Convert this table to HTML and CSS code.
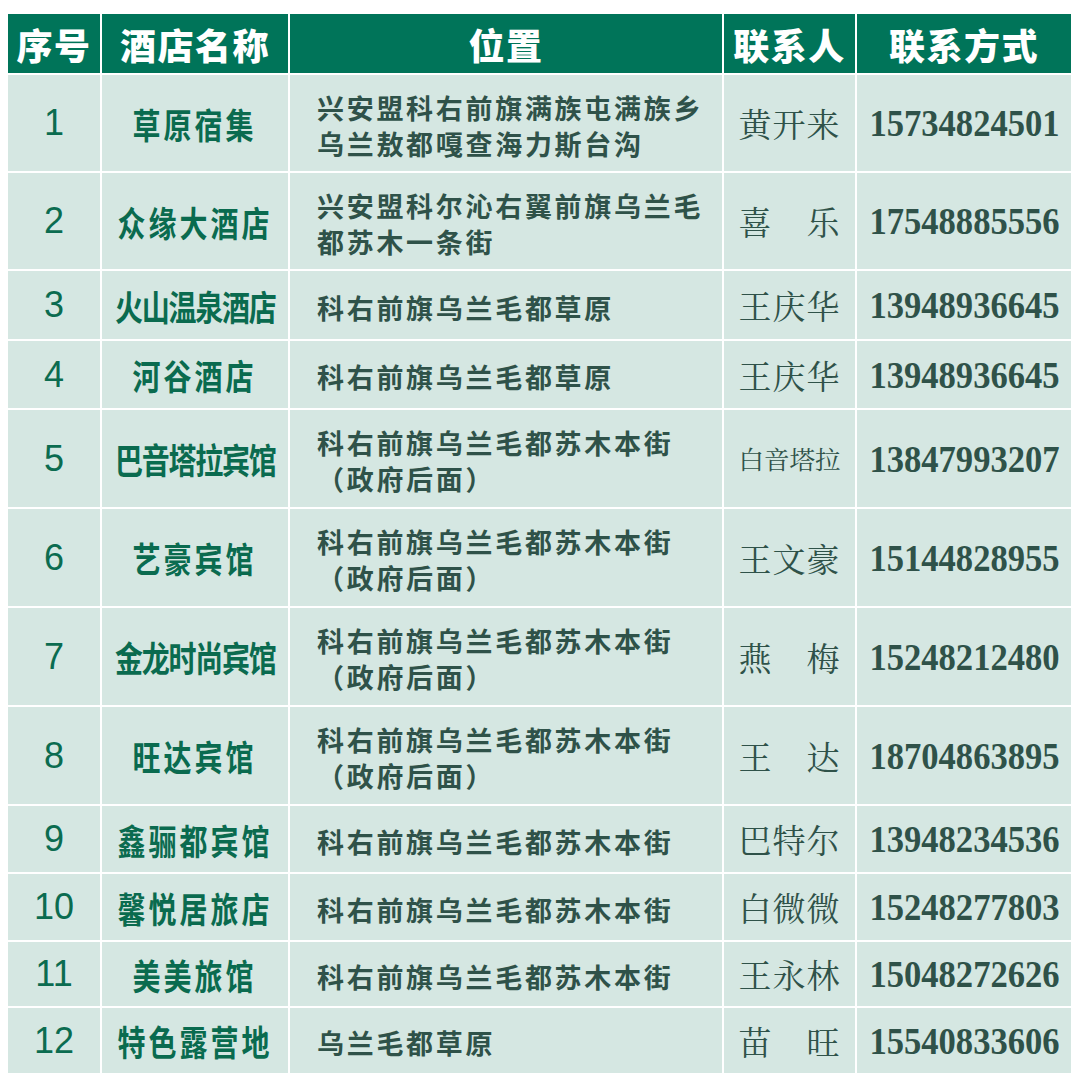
FILE: index.html
```html
<!DOCTYPE html>
<html lang="zh-CN">
<head>
<meta charset="utf-8">
<title>酒店信息</title>
<link rel="stylesheet" href="styles.css">
</head>
<body>
<table class="hotels">
  <colgroup>
    <col class="c-no"><col class="c-name"><col class="c-addr"><col class="c-person"><col class="c-phone">
  </colgroup>
  <thead>
    <tr class="r-head"><th>序号</th><th>酒店名称</th><th>位置</th><th>联系人</th><th>联系方式</th></tr>
  </thead>
  <tbody>
    <tr class="r96">
      <td class="no">1</td>
      <td class="name"><div class="fit"><span class="nm sp-wide">草原宿集</span></div></td>
      <td class="addr">兴安盟科右前旗满族屯满族乡<br>乌兰敖都嘎查海力斯台沟</td>
      <td class="person">黄开来</td>
      <td class="phone"><span class="ph">15734824501</span></td>
    </tr>
    <tr class="r96">
      <td class="no">2</td>
      <td class="name"><div class="fit"><span class="nm sp-wide">众缘大酒店</span></div></td>
      <td class="addr">兴安盟科尔沁右翼前旗乌兰毛<br>都苏木一条街</td>
      <td class="person">喜　乐</td>
      <td class="phone"><span class="ph">17548885556</span></td>
    </tr>
    <tr class="r68">
      <td class="no">3</td>
      <td class="name"><div class="fit"><span class="nm sp-tight">火山温泉酒店</span></div></td>
      <td class="addr">科右前旗乌兰毛都草原</td>
      <td class="person">王庆华</td>
      <td class="phone"><span class="ph">13948936645</span></td>
    </tr>
    <tr class="r67">
      <td class="no">4</td>
      <td class="name"><div class="fit"><span class="nm sp-wide">河谷酒店</span></div></td>
      <td class="addr">科右前旗乌兰毛都草原</td>
      <td class="person">王庆华</td>
      <td class="phone"><span class="ph">13948936645</span></td>
    </tr>
    <tr class="r97">
      <td class="no">5</td>
      <td class="name"><div class="fit"><span class="nm sp-tight">巴音塔拉宾馆</span></div></td>
      <td class="addr">科右前旗乌兰毛都苏木本街<br>（政府后面）</td>
      <td class="person small">白音塔拉</td>
      <td class="phone"><span class="ph">13847993207</span></td>
    </tr>
    <tr class="r97">
      <td class="no">6</td>
      <td class="name"><div class="fit"><span class="nm sp-wide">艺豪宾馆</span></div></td>
      <td class="addr">科右前旗乌兰毛都苏木本街<br>（政府后面）</td>
      <td class="person">王文豪</td>
      <td class="phone"><span class="ph">15144828955</span></td>
    </tr>
    <tr class="r97">
      <td class="no">7</td>
      <td class="name"><div class="fit"><span class="nm sp-tight">金龙时尚宾馆</span></div></td>
      <td class="addr">科右前旗乌兰毛都苏木本街<br>（政府后面）</td>
      <td class="person">燕　梅</td>
      <td class="phone"><span class="ph">15248212480</span></td>
    </tr>
    <tr class="r97">
      <td class="no">8</td>
      <td class="name"><div class="fit"><span class="nm sp-wide">旺达宾馆</span></div></td>
      <td class="addr">科右前旗乌兰毛都苏木本街<br>（政府后面）</td>
      <td class="person">王　达</td>
      <td class="phone"><span class="ph">18704863895</span></td>
    </tr>
    <tr class="r66">
      <td class="no">9</td>
      <td class="name"><div class="fit"><span class="nm sp-wide">鑫骊都宾馆</span></div></td>
      <td class="addr">科右前旗乌兰毛都苏木本街</td>
      <td class="person">巴特尔</td>
      <td class="phone"><span class="ph">13948234536</span></td>
    </tr>
    <tr class="r66">
      <td class="no">10</td>
      <td class="name"><div class="fit"><span class="nm sp-wide">馨悦居旅店</span></div></td>
      <td class="addr">科右前旗乌兰毛都苏木本街</td>
      <td class="person">白微微</td>
      <td class="phone"><span class="ph">15248277803</span></td>
    </tr>
    <tr class="r64">
      <td class="no">11</td>
      <td class="name"><div class="fit"><span class="nm sp-wide">美美旅馆</span></div></td>
      <td class="addr">科右前旗乌兰毛都苏木本街</td>
      <td class="person">王永林</td>
      <td class="phone"><span class="ph">15048272626</span></td>
    </tr>
    <tr class="r65">
      <td class="no">12</td>
      <td class="name"><div class="fit"><span class="nm sp-wide">特色露营地</span></div></td>
      <td class="addr">乌兰毛都草原</td>
      <td class="person">苗　旺</td>
      <td class="phone"><span class="ph">15540833606</span></td>
    </tr>
  </tbody>
</table>
</body>
</html>
```

FILE: styles.css
```css
html, body {
  margin: 0;
  padding: 0;
  background: #ffffff;
}

body {
  font-family: "Noto Sans CJK SC", "Noto Sans", sans-serif;
}

.hotels {
  border-collapse: separate;
  border-spacing: 2px;
  table-layout: fixed;
  width: 1067px;
  margin: 12px 0 0 6px;
  background: #ffffff;
}

.c-no { width: 92px; }
.c-name { width: 186px; }
.c-addr { width: 432px; }
.c-person { width: 131px; }
.c-phone { width: 214px; }

.r-head { height: 59px; }
.r96 { height: 96px; }
.r97 { height: 97px; }
.r68 { height: 68px; }
.r67 { height: 67px; }
.r66 { height: 66px; }
.r65 { height: 65px; }
.r64 { height: 64px; }

th {
  background: #007459;
  color: #ffffff;
  font-family: "Noto Sans CJK SC", sans-serif;
  font-weight: 900;
  font-size: 36px;
  letter-spacing: 1.5px;
  line-height: 1;
  padding: 0;
  text-align: center;
  vertical-align: middle;
}

td {
  background: #d5e7e2;
  padding: 0;
  text-align: center;
  vertical-align: middle;
  line-height: 1.2;
}

.no {
  font-family: "Liberation Sans", "Noto Sans", sans-serif;
  font-size: 36px;
  color: #0b6c50;
}

.fit {
  display: flex;
  justify-content: center;
  align-items: center;
}

.nm {
  flex-shrink: 0;
  display: inline-block;
  white-space: nowrap;
  font-family: "Noto Sans CJK SC", sans-serif;
  font-weight: 700;
  font-size: 35px;
  line-height: 1;
  color: #0a6b4f;
  transform: scaleX(0.8);
}

.sp-wide { letter-spacing: 3.75px; }
.sp-tight { letter-spacing: -1.6px; }

.addr {
  text-align: left;
  padding: 5px 0 0 27px;
  font-family: "Noto Sans CJK SC", sans-serif;
  font-weight: 700;
  font-size: 27px;
  letter-spacing: 2.7px;
  line-height: 36px;
  color: #2f5249;
  white-space: nowrap;
}

.person {
  font-family: "Noto Serif CJK SC", "Noto Sans CJK SC", serif;
  font-weight: 400;
  font-size: 33px;
  letter-spacing: 1px;
  color: #2f5249;
  white-space: nowrap;
}

.person.small {
  font-size: 25.5px;
  letter-spacing: 0;
}

.phone {
  font-family: "Liberation Serif", "Times New Roman", serif;
  font-weight: 700;
  color: #2f5249;
}

.ph {
  display: inline-block;
  font-size: 38px;
  line-height: 1;
  white-space: nowrap;
  transform: scaleX(0.91);
}
```
